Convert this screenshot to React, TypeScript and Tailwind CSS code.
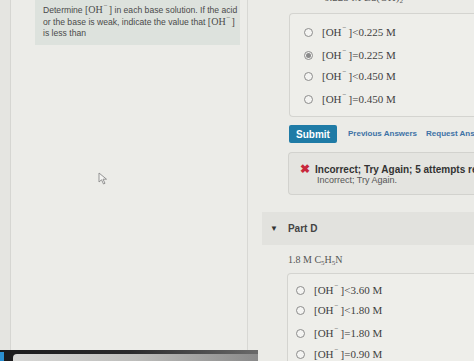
import React from 'react'

const serif = { fontFamily: '"Liberation Serif", "Times New Roman", serif' }

function OH({ tight }: { tight?: boolean }) {
  return (
    <span>
      [OH<sup className={`relative top-[-1px] ml-[1px] align-top text-[7px] leading-none ${tight ? 'mr-[1px]' : 'mr-[2px]'}`}>−</sup>]
    </span>
  )
}

function Radio({ checked }: { checked?: boolean }) {
  return (
    <span className="inline-flex h-[9px] w-[9px] items-center justify-center rounded-full border border-[#8c8c8c] bg-[#f4f4f2]">
      {checked ? <span className="h-[5px] w-[5px] rounded-full bg-[#8a8a8a]" /> : null}
    </span>
  )
}

function Option({ label, checked, gap }: { label: string; checked?: boolean; gap: string }) {
  return (
    <div className={`flex h-[12px] items-center gap-[9px] ${gap}`}>
      <Radio checked={checked} />
      <span className="text-[11px] leading-[12px] text-[#3f3f3f]" style={serif}>
        <OH />
        {label}
      </span>
    </div>
  )
}

export default function App() {
  return (
    <div
      className="relative flex h-[361px] w-[474px] overflow-hidden bg-[#ebebe7] text-[#333]"
      style={{ fontFamily: '"Liberation Sans", Arial, sans-serif' }}
    >
      <div className="w-[11px] shrink-0 border-r border-[#d6d6d2] bg-[#e5e5e1]" />

      <div className="w-[237px] shrink-0 border-r border-[#d8d8d4] bg-[#ececE8] pl-[24px] pr-[7px]">
        <div className="h-[45px] bg-[#dde2dd] pl-[8px] pr-[2px] pt-[4px] text-[8.6px] leading-[11px] text-[#4a4a4a]">
          Determine <span style={serif} className="text-[10px]"><OH tight /></span> in each base solution. If the acid or the base is weak, indicate the value that{' '}
          <span style={serif} className="text-[10px]"><OH tight /></span> is less than
        </div>
        <div className="ml-[63px] mt-[127px] text-[13px] text-[#9a9a9a]">
          <svg width="11" height="13" viewBox="0 0 11 13">
            <path d="M1 1 L1 10 L3.5 7.8 L5.5 12 L7 11.3 L5 7.2 L8.5 7.2 Z" fill="#f4f4f2" stroke="#8a8a8a" strokeWidth="0.9" />
          </svg>
        </div>
      </div>

      <div className="flex-1 pl-[14px]">
        <div className="mt-[-9px] h-[13px] pl-[62px] text-[11px] leading-[13px] text-[#555]" style={serif}>
          0.225 M Ba(OH)<sub className="text-[7px] leading-none">2</sub>
        </div>
        <div className="ml-[27px] mt-[9px] h-[104px] rounded-l-[4px] border-y border-l border-[#d4d4d0] bg-[#eeeeea] pl-[14px] pt-[12px]">
          <Option label="<0.225 M" gap="" />
          <Option label="=0.225 M" checked gap="mt-[11px]" />
          <Option label="<0.450 M" gap="mt-[9px]" />
          <Option label="=0.450 M" gap="mt-[11px]" />
        </div>

        <div className="ml-[27px] mt-[8px] flex h-[18px] items-center">
          <div className="flex h-[18px] w-[48px] items-center justify-center rounded-[2px] bg-[#1f7ba6] text-[10px] font-bold text-white">
            Submit
          </div>
          <span className="ml-[11px] text-[8px] font-bold text-[#3d72a6]">Previous Answers</span>
          <span className="ml-[9px] whitespace-nowrap text-[8px] font-bold text-[#3d72a6]">Request Answer</span>
        </div>

        <div className="ml-[26px] mt-[9px] h-[43px] rounded-l-[4px] border-y border-l border-[#d2d2ce] bg-[#e4e4e0] pl-[11px] pt-[10px]">
          <div className="flex h-[12px] items-center whitespace-nowrap">
            <span className="text-[12px] font-bold leading-[12px] text-[#c8283c]">✖</span>
            <span className="ml-[5px] text-[10px] font-bold text-[#333]">Incorrect; Try Again; 5 attempts remaining</span>
          </div>
          <div className="ml-[17px] text-[9px] leading-[11px] text-[#555]">Incorrect; Try Again.</div>
        </div>

        <div className="mt-[17px] flex h-[33px] items-center bg-[#e2e2de] pl-[8px]">
          <span className="text-[8px] text-[#333]">▼</span>
          <span className="ml-[10px] text-[10px] font-bold text-[#444]">Part D</span>
        </div>

        <div className="mt-[8px] h-[13px] pl-[26px] text-[10px] leading-[13px] text-[#555]" style={serif}>
          1.8 M C<sub className="text-[7px] leading-none">5</sub>H<sub className="text-[7px] leading-none">5</sub>N
        </div>

        <div className="ml-[25px] mr-[4px] mt-[7px] h-[100px] rounded-t-[4px] border-x border-t border-[#d4d4d0] bg-[#eeeeea] pl-[8px] pt-[10px]">
          <Option label="<3.60 M" gap="" />
          <Option label="<1.80 M" gap="mt-[8px]" />
          <Option label="=1.80 M" gap="mt-[11px]" />
          <Option label="=0.90 M" gap="mt-[9px]" />
        </div>
      </div>

      <div className="absolute bottom-0 left-0 h-[11px] w-[258px] bg-gradient-to-r from-[#1a1a1c] via-[#2a2a2c] to-[#6a6a6a]">
        <div className="absolute left-0 top-[2px] h-[9px] w-[4px] bg-[#2b8fd0]" />
        <div className="absolute left-[13px] top-[4px] h-[7px] w-[245px] rounded-tl-[4px] bg-gradient-to-r from-[#d8d8d6] via-[#bdbdbb] to-[#8a8a8a]" />
      </div>
    </div>
  )
}
